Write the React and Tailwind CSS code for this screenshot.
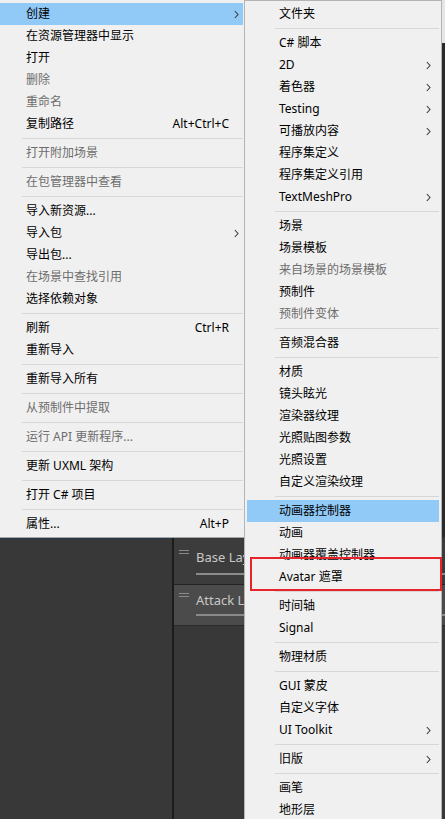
import React from "react";

const FONT = { fontFamily: '"Noto Sans", "Noto Sans CJK SC", sans-serif' };

const leftItems = [
  { t: "创建", arrow: true, hl: true },
  { t: "在资源管理器中显示" },
  { t: "打开" },
  { t: "删除", dis: true },
  { t: "重命名", dis: true },
  { t: "复制路径", sc: "Alt+Ctrl+C" },
  "sep",
  { t: "打开附加场景", dis: true },
  "sep",
  { t: "在包管理器中查看", dis: true },
  "sep",
  { t: "导入新资源..." },
  { t: "导入包", arrow: true },
  { t: "导出包..." },
  { t: "在场景中查找引用", dis: true },
  { t: "选择依赖对象" },
  "sep",
  { t: "刷新", sc: "Ctrl+R" },
  { t: "重新导入" },
  "sep",
  { t: "重新导入所有" },
  "sep",
  { t: "从预制件中提取", dis: true },
  "sep",
  { t: "运行 API 更新程序...", dis: true },
  "sep",
  { t: "更新 UXML 架构" },
  "sep",
  { t: "打开 C# 项目" },
  "sep",
  { t: "属性...", sc: "Alt+P" },
];

const rightItems = [
  { t: "文件夹" },
  "sep",
  { t: "C# 脚本" },
  { t: "2D", arrow: true },
  { t: "着色器", arrow: true },
  { t: "Testing", arrow: true },
  { t: "可播放内容", arrow: true },
  { t: "程序集定义" },
  { t: "程序集定义引用" },
  { t: "TextMeshPro", arrow: true },
  "sep",
  { t: "场景" },
  { t: "场景模板" },
  { t: "来自场景的场景模板", dis: true },
  { t: "预制件" },
  { t: "预制件变体", dis: true },
  "sep",
  { t: "音频混合器" },
  "sep",
  { t: "材质" },
  { t: "镜头眩光" },
  { t: "渲染器纹理" },
  { t: "光照贴图参数" },
  { t: "光照设置" },
  { t: "自定义渲染纹理" },
  "sep",
  { t: "动画器控制器", hl: true },
  { t: "动画" },
  { t: "动画器覆盖控制器" },
  { t: "Avatar 遮罩" },
  "sep",
  { t: "时间轴" },
  { t: "Signal" },
  "sep",
  { t: "物理材质" },
  "sep",
  { t: "GUI 蒙皮" },
  { t: "自定义字体" },
  { t: "UI Toolkit", arrow: true },
  "sep",
  { t: "旧版", arrow: true },
  "sep",
  { t: "画笔" },
  { t: "地形层" },
];

function Chevron() {
  return (
    <svg width="5" height="9" viewBox="0 0 5 9">
      <polyline points="0.8,1 4,4.5 0.8,8" fill="none" stroke="#3c3c3c" strokeWidth="1.1" />
    </svg>
  );
}

function MenuList({ items, textPad, sepPad, arrowCol }) {
  return (
    <div className="flex flex-col">
      {items.map((it, i) =>
        it === "sep" ? (
          <div key={i} className="h-[7px] flex items-center" style={{ paddingLeft: sepPad }}>
            <div className="h-px w-full bg-[#d7d7d7]" />
          </div>
        ) : (
          <div
            key={i}
            className={`h-[22px] flex items-center text-[12px] leading-none ${it.hl ? "bg-[#91c9f7]" : ""} ${it.dis ? "text-[#6d6d6d]" : "text-black"}`}
            style={{ paddingLeft: textPad }}
          >
            <span className="flex-1 whitespace-nowrap">{it.t}</span>
            {it.sc && <span className="whitespace-nowrap">{it.sc}</span>}
            <span className="flex justify-center shrink-0" style={{ width: arrowCol }}>
              {it.arrow && <Chevron />}
            </span>
          </div>
        )
      )}
    </div>
  );
}

export default function App() {
  return (
    <div className="relative w-[445px] h-[819px] overflow-hidden bg-[#383838]" style={FONT}>
      {/* editor behind the menus */}
      <div className="flex flex-col h-full">
        <div className="h-[537px] flex">
          <div className="flex-1 bg-[#c8c8c8]" />
          <div className="w-[4px] flex flex-col">
            <div className="h-[43px] bg-[#e6e6e6]" />
            <div className="flex-1 bg-[#2a2a2a]" />
          </div>
        </div>
        <div className="flex-1 flex">
          <div className="w-[172px] bg-[#383838] border-t-2 border-[#24384c]" />
          <div className="w-[2px] bg-[#1c1c1c]" />
          <div className="flex-1 flex flex-col pt-[2px] bg-[#383838]">
            <div className="h-[46px] bg-[#3c3c3c] border-b border-[#242424] flex pl-[5px] pt-[10px]">
              <div className="w-[10px] flex flex-col gap-[2px] mt-[1px]">
                <div className="h-px bg-[#8a8a8a]" />
                <div className="h-px bg-[#8a8a8a]" />
              </div>
              <div className="ml-[7px] flex-1 flex flex-col">
                <span className="text-[13px] leading-[16px] text-[#c8c8c8] whitespace-nowrap">Base Layer</span>
                <div className="mt-[8px] h-[2px] bg-[#8a8a8a]" />
              </div>
            </div>
            <div className="h-[41px] bg-[#4b4b4b] flex pl-[5px] pt-[7px] border-b border-[#2a2a2a]">
              <div className="w-[10px] flex flex-col gap-[2px] mt-[1px]">
                <div className="h-px bg-[#8a8a8a]" />
                <div className="h-px bg-[#8a8a8a]" />
              </div>
              <div className="ml-[7px] flex-1 flex flex-col">
                <span className="text-[13px] leading-[16px] text-[#c8c8c8] whitespace-nowrap">Attack Layer</span>
                <div className="mt-[6px] h-[2px] bg-[#8a8a8a]" />
              </div>
            </div>
          </div>
        </div>
      </div>

      {/* parent context menu */}
      <div className="absolute left-0 top-0 w-[247px] h-[538px] bg-[#f0f0f0] border-b border-[#a8a8a8] pt-[3px]">
        <div className="w-[243px]">
          <MenuList items={leftItems} textPad={26} sepPad={22} arrowCol={14} />
        </div>
      </div>

      {/* create submenu */}
      <div className="absolute left-[244px] top-0 w-[198px] h-[830px] bg-[#f0f0f0] border border-[#b4b4b4] pt-[2px] px-[2px]">
        <MenuList items={rightItems} textPad={32} sepPad={28} arrowCol={22} />
      </div>

      {/* highlight box */}
      <div className="absolute left-[250px] top-[557px] w-[192px] h-[34px] border-2 border-[#e8242a]" />
    </div>
  );
}
